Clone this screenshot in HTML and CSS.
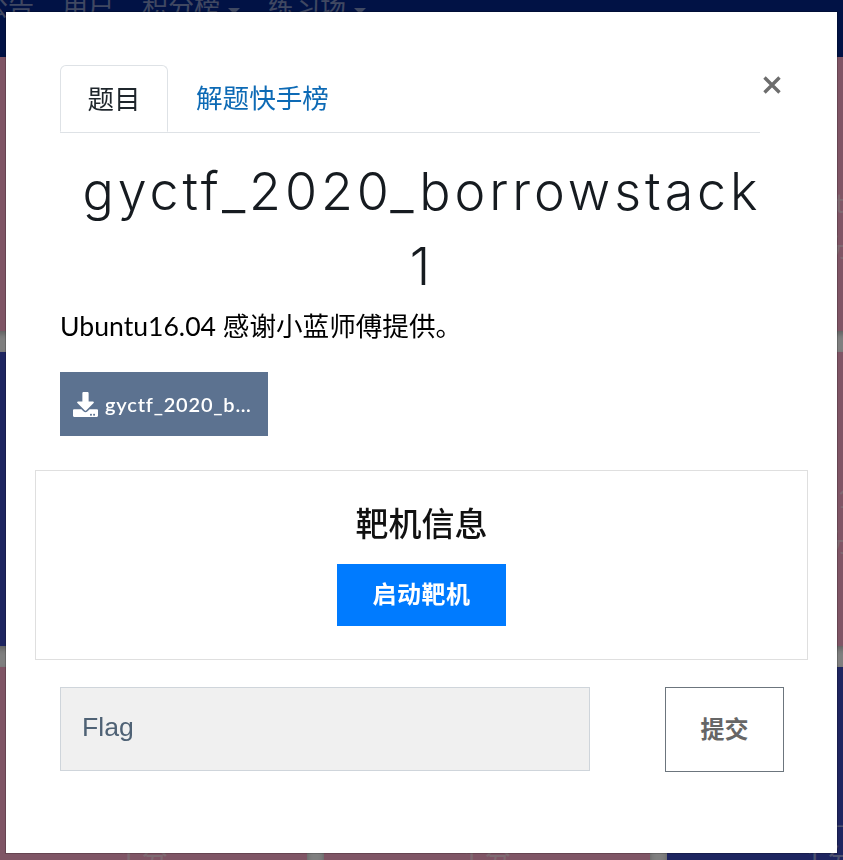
FILE: index.html
```html
<!DOCTYPE html>
<html lang="zh">
<head>
    <meta charset="UTF-8">
    <meta name="viewport" content="width=device-width, initial-scale=1.0">
    <title>gyctf_2020_borrowstack</title>
    <link rel="stylesheet" href="styles.css">
</head>
<body>
    <nav class="navbar">
        <a class="nav-item">公告</a>
        <a class="nav-item">用户</a>
        <a class="nav-item nav-caret">积分榜</a>
        <a class="nav-item nav-caret">练习场</a>
    </nav>

    <div class="tiles">
        <div class="tile tile-pink"><div class="tile-name">rip</div><div class="tile-score">1 分</div></div>
        <div class="tile tile-pink"><div class="tile-name">warmup_csaw_2016</div><div class="tile-score">1 分</div></div>
        <div class="tile tile-pink"><div class="tile-name">pwn1_sctf_2016</div><div class="tile-score">1 分</div></div>
        <div class="tile tile-navy"><div class="tile-name">jarvisoj_level0</div><div class="tile-score">1 分</div></div>
        <div class="tile tile-pink"><div class="tile-name">ciscn_2019_c_1</div><div class="tile-score">1 分</div></div>
        <div class="tile tile-pink"><div class="tile-name">ciscn_2019_n_8</div><div class="tile-score">1 分</div></div>
        <div class="tile tile-pink"><div class="tile-name">ciscn_2019_n_1</div><div class="tile-score">1 分</div></div>
        <div class="tile tile-pink"><div class="tile-name">bjdctf_2020_babystack</div><div class="tile-score">1 分</div></div>
        <div class="tile tile-navy"><div class="tile-name">xdctf2015_pwn200</div><div class="tile-score">1 分</div></div>
    </div>

    <div class="backdrop">
        <div class="modal">
            <svg class="close" viewBox="0 0 18 18" width="18" height="18">
                <path d="M1.5 1.5L16.5 16.5M16.5 1.5L1.5 16.5"></path>
            </svg>

            <div class="tabs">
                <a class="tab tab-active">题目</a>
                <a class="tab">解题快手榜</a>
            </div>

            <h1 class="title">gyctf_2020_borrowstack 1</h1>
            <p class="desc">Ubuntu16.04 感谢小蓝师傅提供。</p>

            <a class="file-btn">
                <svg class="file-icon" viewBox="0 0 512 512" width="25" height="25">
                    <path d="M216 0h80c13.3 0 24 10.7 24 24v168h87.7c17.8 0 26.7 21.5 14.1 34.1L269.7 378.3c-7.5 7.5-19.8 7.5-27.3 0L90.1 226.1c-12.6-12.6-3.7-34.1 14.1-34.1H192V24c0-13.3 10.7-24 24-24zm296 376v112c0 13.3-10.7 24-24 24H24c-13.3 0-24-10.7-24-24V376c0-13.3 10.7-24 24-24h146.7l49 49c20.1 20.1 52.5 20.1 72.6 0l49-49H488c13.3 0 24 10.7 24 24zm-124 88c0-11-9-20-20-20s-20 9-20 20 9 20 20 20 20-9 20-20zm64 0c0-11-9-20-20-20s-20 9-20 20 9 20 20 20 20-9 20-20z"></path>
                </svg>
                <span class="file-name">gyctf_2020_borrowstack</span>
            </a>

            <div class="target-card">
                <h3 class="target-title">靶机信息</h3>
                <button class="target-btn">启动靶机</button>
            </div>

            <div class="flag-row">
                <input class="flag-input" type="text" placeholder="Flag">
                <button class="submit-btn">提交</button>
            </div>
        </div>
    </div>
</body>
</html>
```

FILE: styles.css
```css
html, body {
    height: 100%;
}
body {
    margin: 0;
    height: 860px;
    overflow: hidden;
    background: white;
    font-family: Lato, "Noto Sans CJK SC", sans-serif;
    color: #000;
}
.navbar {
    height: 57px;
    background: #02248a;
    box-sizing: border-box;
    padding-left: 62px;
    display: flex;
    gap: 28px;
}
.nav-item {
    font-size: 26px;
    line-height: 26px;
    margin-top: -7px;
    color: rgba(255, 255, 255, 0.5);
    white-space: nowrap;
}
.nav-item:first-child {
    margin-left: -80px;
}
.nav-caret {
    display: flex;
    align-items: center;
    gap: 8px;
    height: 26px;
}
.nav-caret::after {
    content: "";
    border-top: 6px solid rgba(255, 255, 255, 0.5);
    border-left: 6px solid transparent;
    border-right: 6px solid transparent;
    margin-top: 9px;
}
.tiles {
    display: grid;
    grid-template-columns: repeat(3, 326px);
    grid-template-rows: 274px 294px 294px;
    gap: 21px 17px;
    margin-left: -19px;
}
.tile {
    box-shadow: 0 3px 6px rgba(0, 0, 0, 0.25);
    text-align: center;
    color: rgba(255, 255, 255, 0.5);
    font-size: 26px;
    line-height: 36px;
    padding-top: 128px;
    box-sizing: border-box;
    overflow: hidden;
    white-space: nowrap;
}
.tile-pink {
    background: #ffaaca;
}
.tile-navy {
    background: #3c4ac0;
}
.tile-score {
    margin-top: 8px;
}
.backdrop {
    position: fixed;
    top: 0;
    left: 0;
    right: 0;
    bottom: 0;
    background: rgba(0, 0, 0, 0.5);
}
.modal {
    position: relative;
    width: 831px;
    height: 841px;
    margin: 12px 0 0 6px;
    box-sizing: border-box;
    padding: 53px 53px 0 54px;
    background: white;
    box-shadow: 0 0 0 1px rgba(0, 0, 0, 0.2);
}
.close {
    position: absolute;
    top: 64px;
    left: 756.5px;
    fill: none;
    stroke: #6d6d6d;
    stroke-width: 3.4;
}
.tabs {
    display: flex;
    width: 700px;
    height: 68px;
    box-sizing: border-box;
    border-bottom: 1px solid #dee2e6;
    font-size: 26.6px;
    line-height: 66px;
}
.tab {
    padding: 0 28px;
    color: #0d6ab5;
    white-space: nowrap;
}
.tab-active {
    height: 67px;
    box-sizing: border-box;
    padding: 0 26.4px;
    color: #1f262c;
    background: white;
    border: 1px solid #dee2e6;
    border-bottom: 1px solid white;
    border-radius: 6px 6px 0 0;
}
.title {
    margin: 21px 0 0;
    padding: 0 10px 0 10px;
    font-family: Inter, sans-serif;
    font-size: 52px;
    font-weight: 300;
    line-height: 75px;
    letter-spacing: 3.9px;
    text-align: center;
    color: #161b20;
}
.desc {
    margin: 2px 0 0;
    font-size: 26.6px;
    line-height: 40px;
    color: #000;
}
.file-btn {
    display: flex;
    align-items: center;
    width: 208px;
    height: 64px;
    margin-top: 26px;
    box-sizing: border-box;
    padding: 0 16px 0 13px;
    gap: 7px;
    background: #5c7290;
    color: white;
    font-size: 20px;
    font-weight: 600;
    letter-spacing: 0.8px;
}
.file-icon {
    flex: none;
    fill: white;
}
.file-name {
    overflow: hidden;
    text-overflow: ellipsis;
    white-space: nowrap;
}
.target-card {
    margin: 34px -24px 0 -25px;
    height: 190px;
    box-sizing: border-box;
    border: 1px solid #dfdfdf;
    padding-top: 30px;
    text-align: center;
}
.target-title {
    margin: 0;
    font-size: 33px;
    font-weight: 500;
    line-height: 44px;
    color: #111;
}
.target-btn {
    display: block;
    width: 169px;
    height: 62px;
    margin: 19px auto 0;
    padding: 0 0 6px;
    border: none;
    background: #007bff;
    color: white;
    font-family: Lato, "Noto Sans CJK SC", sans-serif;
    font-size: 24px;
    font-weight: 700;
    letter-spacing: 0.5px;
}
.flag-row {
    display: flex;
    justify-content: space-between;
    align-items: flex-start;
    width: 724px;
    margin-top: 27px;
}
.flag-input {
    width: 530px;
    height: 84px;
    box-sizing: border-box;
    padding: 0 21px 4px;
    border: 1px solid #cfd5db;
    background: #f0f0f0;
    font-family: "Liberation Sans", sans-serif;
    font-size: 26.6px;
    outline: none;
}
.flag-input::placeholder {
    color: #4f6275;
    opacity: 1;
}
.submit-btn {
    width: 119px;
    height: 85px;
    padding: 0 0 4px;
    border: 1px solid #6c757d;
    background: white;
    color: #666;
    font-family: "Liberation Sans", "Noto Sans CJK SC", sans-serif;
    font-size: 24px;
    font-weight: 700;
}
```
